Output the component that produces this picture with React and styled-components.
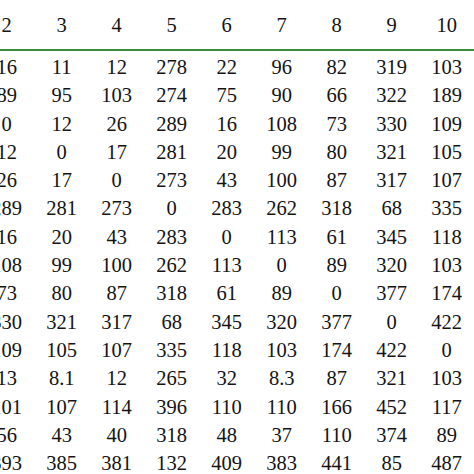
import React from 'react'
import styled, { createGlobalStyle } from 'styled-components'

const GlobalStyle = createGlobalStyle`
    html, body {
        margin: 0;
        padding: 0;
        background: #fff;
        overflow: hidden;
    }
`;

const Page = styled.div`
    width: 474px;
    height: 474px;
    overflow: hidden;
    background: #fff;
`;

const Table = styled.div`
    margin-left: -20.8px;
    width: 520px;
    font-family: "Liberation Serif", "Times New Roman", serif;
    font-size: 20.5px;
    color: #141414;
`;

const HeadRow = styled.div`
    display: grid;
    grid-template-columns: repeat(9, 55px);
    padding: 11px 0 10px;
    line-height: 28px;
    border-bottom: 2px solid #3c8c3a;
    width: 100%;
`;

const Body = styled.div`
    padding-top: 2px;
`;

const Row = styled.div`
    display: grid;
    grid-template-columns: repeat(9, 55px);
    line-height: 28.3px;
    height: 28.3px;
`;

const Cell = styled.div`
    text-align: center;
    white-space: nowrap;
`;

const headers = [2, 3, 4, 5, 6, 7, 8, 9, 10];

const rows = [
    ['16', '11', '12', '278', '22', '96', '82', '319', '103'],
    ['89', '95', '103', '274', '75', '90', '66', '322', '189'],
    ['0', '12', '26', '289', '16', '108', '73', '330', '109'],
    ['12', '0', '17', '281', '20', '99', '80', '321', '105'],
    ['26', '17', '0', '273', '43', '100', '87', '317', '107'],
    ['289', '281', '273', '0', '283', '262', '318', '68', '335'],
    ['16', '20', '43', '283', '0', '113', '61', '345', '118'],
    ['108', '99', '100', '262', '113', '0', '89', '320', '103'],
    ['73', '80', '87', '318', '61', '89', '0', '377', '174'],
    ['330', '321', '317', '68', '345', '320', '377', '0', '422'],
    ['109', '105', '107', '335', '118', '103', '174', '422', '0'],
    ['13', '8.1', '12', '265', '32', '8.3', '87', '321', '103'],
    ['101', '107', '114', '396', '110', '110', '166', '452', '117'],
    ['56', '43', '40', '318', '48', '37', '110', '374', '89'],
    ['393', '385', '381', '132', '409', '383', '441', '85', '487'],
];

function App() {
    return (
        <Page>
            <GlobalStyle />
            <Table>
                <HeadRow>
                    {headers.map(h => <Cell key={h}>{h}</Cell>)}
                </HeadRow>
                <Body>
                    {rows.map((r, i) => (
                        <Row key={i}>
                            {r.map((v, j) => <Cell key={j}>{v}</Cell>)}
                        </Row>
                    ))}
                </Body>
            </Table>
        </Page>
    )
}

export default App
